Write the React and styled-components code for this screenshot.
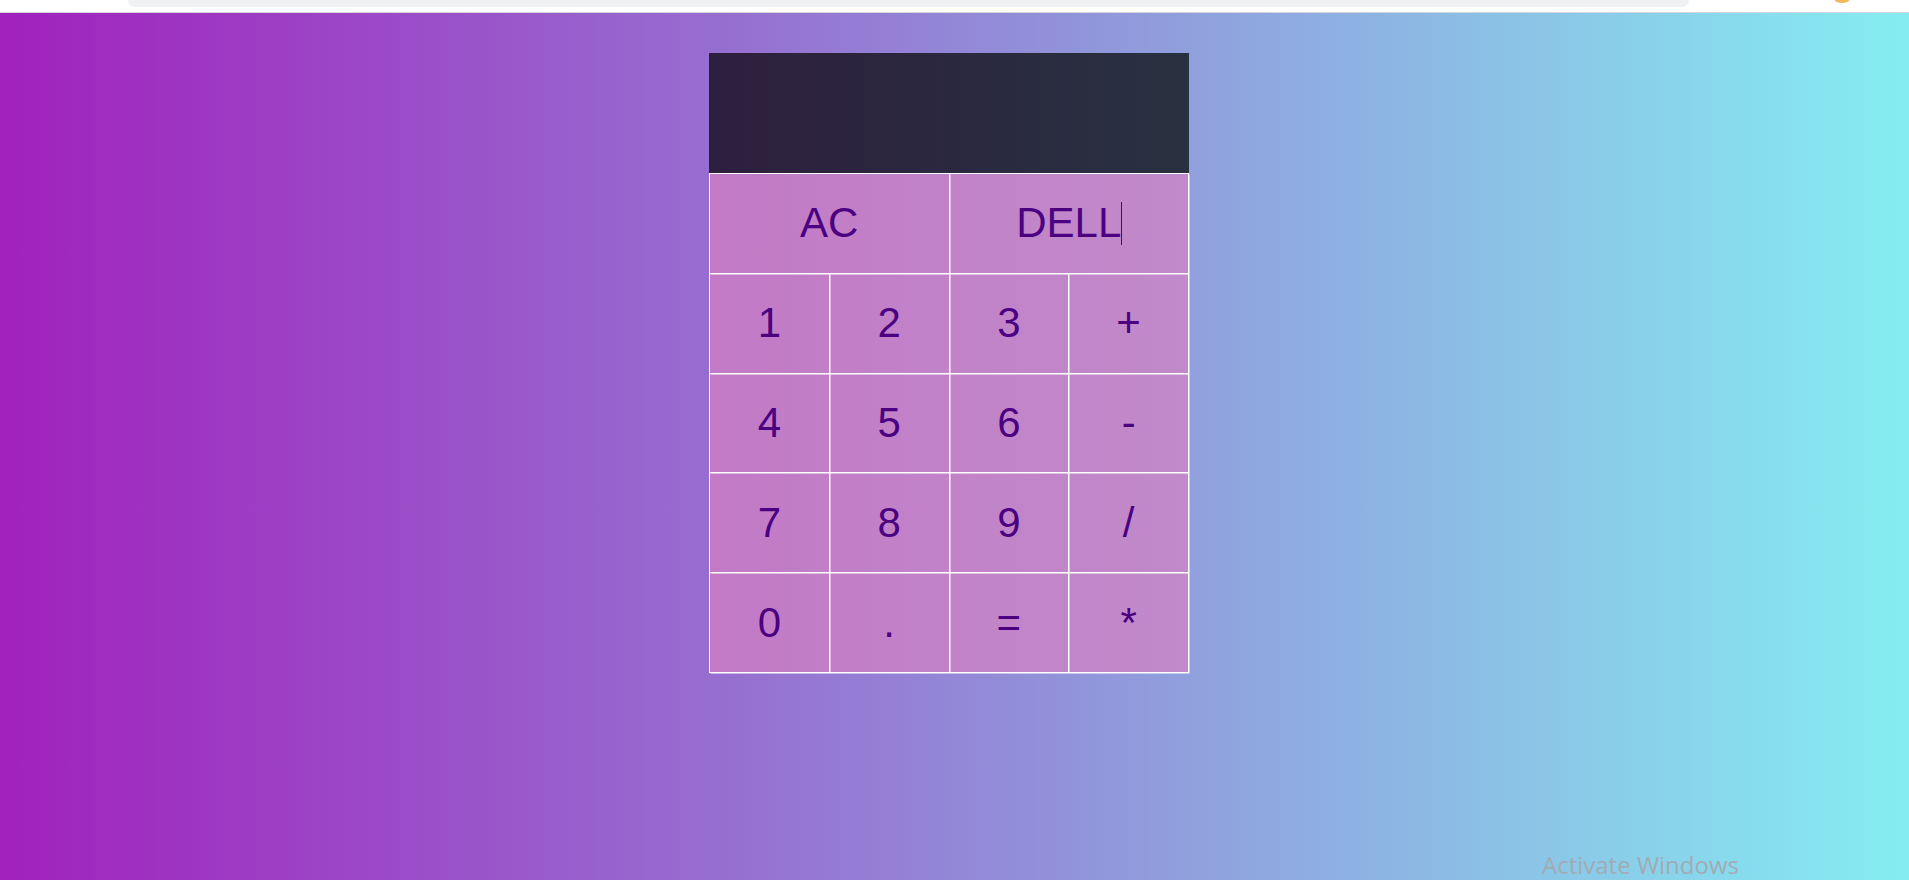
import React from 'react';
import styled, { createGlobalStyle } from 'styled-components';

const GlobalStyle = createGlobalStyle`
  * { box-sizing: border-box; }
  html, body {
    margin: 0;
    padding: 0;
    height: 100%;
    overflow: hidden;
    font-family: "Liberation Sans", Arial, sans-serif;
  }
`;

const Page = styled.div`
  height: 880px;
  display: flex;
  flex-direction: column;
`;

const ChromeStrip = styled.div`
  height: 13px;
  flex-shrink: 0;
  background: #ffffff;
  border-bottom: 1px solid #d6d6d8;
  position: relative;
`;

const AddressBar = styled.div`
  position: absolute;
  left: 128px;
  right: 220px;
  top: 0;
  height: 7px;
  background: #f0f1f3;
  border-radius: 0 0 10px 10px;
`;

const ExtIcon = styled.div`
  position: absolute;
  left: 1834px;
  top: -6px;
  width: 16px;
  height: 9px;
  border-radius: 50%;
  background: #f4b860;
`;

const Main = styled.main`
  flex: 1;
  background: linear-gradient(to right, #a121bd, #85edf1);
  display: flex;
  justify-content: center;
  align-items: flex-start;
  padding: 40px 11px 0 0;
  position: relative;
`;

const Calculator = styled.div`
  width: 480px;
  display: flex;
  flex-direction: column;
`;

const Display = styled.div`
  height: 120px;
  background: linear-gradient(to right, #2d1f3e, #283140);
`;

const Keypad = styled.div`
  height: 500px;
  display: grid;
  grid-template-columns: repeat(4, 1fr);
  grid-template-rows: repeat(5, 1fr);
  background: linear-gradient(to right, #c27ac6, #c18aca);
  border-top: 1px solid #ffffff;
  border-left: 1px solid #ffffff;
`;

const Key = styled.button`
  grid-column: span ${p => p.$span || 1};
  background: transparent;
  border: none;
  border-right: 1px solid #ffffff;
  border-bottom: 1px solid #ffffff;
  box-shadow: 0.5px 0.5px 0 #ffffff;
  color: #4b0082;
  font-family: "Liberation Sans", Arial, sans-serif;
  font-size: 42px;
  padding: 0;
  display: flex;
  align-items: center;
  justify-content: center;
  cursor: pointer;
`;

const Label = styled.span`
  position: relative;
`;

const Caret = styled.span`
  position: absolute;
  left: 100%;
  top: 50%;
  height: 43px;
  margin-top: -21px;
  border-left: 1px solid #4b0082;
`;

const Watermark = styled.div`
  position: absolute;
  left: 1542px;
  bottom: 0;
  font-family: "Open Sans", "Noto Sans", sans-serif;
  font-size: 24px;
  line-height: 30px;
  color: #a2abb5;
  pointer-events: none;
`;

const keys = ['1', '2', '3', '+', '4', '5', '6', '-', '7', '8', '9', '/', '0', '.', '=', '*'];

export default function App() {
  return (
    <>
      <GlobalStyle />
      <Page>
        <ChromeStrip>
          <AddressBar />
          <ExtIcon />
        </ChromeStrip>
        <Main>
          <Calculator>
            <Display />
            <Keypad>
              <Key $span={2}>AC</Key>
              <Key $span={2}>
                <Label>DELL<Caret /></Label>
              </Key>
              {keys.map(k => (
                <Key key={k}>{k}</Key>
              ))}
            </Keypad>
          </Calculator>
          <Watermark>Activate Windows</Watermark>
        </Main>
      </Page>
    </>
  );
}
